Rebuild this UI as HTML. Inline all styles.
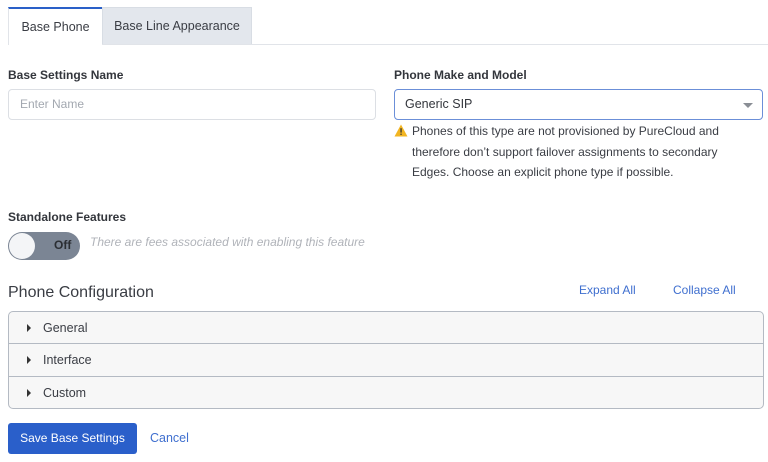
<!DOCTYPE html>
<html><head><style>
*{box-sizing:border-box;margin:0;padding:0}
body{width:768px;height:462px;background:#fff;font-family:"Liberation Sans",sans-serif;color:#4a4d54;position:relative;overflow:hidden;font-size:12px}
.a{position:absolute}
.lbl{font-weight:bold;font-size:12px;color:#33363c}
</style></head><body>
<div class="a" style="left:8px;top:44px;width:760px;height:1px;background:#e1e4e9"></div>
<div class="a" style="left:8px;top:7px;width:94px;height:38px;border-top:2px solid #2a60c8;border-left:1px solid #e1e4e9;background:#fff;text-align:center;line-height:36px;font-size:12.5px;color:#3a3d44">Base Phone</div>
<div class="a" style="left:102px;top:7px;width:150px;height:37px;background:#e3e7ed;border:1px solid #d8dde4;border-bottom:none;text-align:center;line-height:36px;font-size:12.5px;color:#3a3d44">Base Line Appearance</div>

<div class="a lbl" style="left:8px;top:68px">Base Settings Name</div>
<div class="a" style="left:8px;top:89px;width:368px;height:31px;border:1px solid #dcdfe4;border-radius:4px;padding-left:11px;line-height:29px;color:#a3a8b0;font-size:12px">Enter Name</div>

<div class="a lbl" style="left:394px;top:68px">Phone Make and Model</div>
<div class="a" style="left:394px;top:89px;width:369px;height:31px;border:1px solid #6b8fd8;border-radius:4px;padding-left:10px;line-height:29px;color:#33363c;font-size:12.5px">Generic SIP
<div class="a" style="right:9px;top:13px;width:0;height:0;border-left:5px solid transparent;border-right:5px solid transparent;border-top:5px solid #8a8e95"></div></div>
<svg class="a" style="left:394px;top:124px" width="14" height="13" viewBox="0 0 14 13"><path d="M7 0.5L13.5 12.5H0.5Z" fill="#f2b521"/><rect x="6.4" y="4.2" width="1.3" height="4.4" fill="#333"/><rect x="6.4" y="9.6" width="1.3" height="1.3" fill="#333"/></svg>
<div class="a" style="left:412px;top:121px;width:330px;line-height:20.5px;font-size:12px;color:#3a3d44">Phones of this type are not provisioned by PureCloud and therefore don’t support failover assignments to secondary Edges. Choose an explicit phone type if possible.</div>

<div class="a lbl" style="left:8px;top:210px">Standalone Features</div>
<div class="a" style="left:8px;top:232px;width:72px;height:28px;border-radius:14px;background:#7b8594"></div>
<div class="a" style="left:9px;top:233px;width:26px;height:26px;border-radius:13px;background:#f4f5f7"></div>
<div class="a" style="left:54px;top:238px;font-weight:bold;color:#2b2e33;font-size:12px">Off</div>
<div class="a" style="left:90px;top:235px;font-style:italic;color:#b0b3b9;font-size:12px">There are fees associated with enabling this feature</div>

<div class="a" style="left:8px;top:284px;font-size:16px;color:#3a3d44">Phone Configuration</div>
<div class="a" style="left:579px;top:283px;color:#3f6fcf;font-size:12px">Expand All</div>
<div class="a" style="left:673px;top:283px;color:#3f6fcf;font-size:12px">Collapse All</div>

<div class="a" style="left:8px;top:311px;width:756px;height:98px;border:1px solid #b4bac3;border-radius:5px;background:#f7f7f7;overflow:hidden">
 <div style="height:32px;border-bottom:1px solid #b4bac3;position:relative"><span class="a" style="left:18px;top:12px;border-top:4px solid transparent;border-bottom:4px solid transparent;border-left:4px solid #333"></span><span class="a" style="left:34px;top:9px;font-size:12.5px;color:#3a3d44">General</span></div>
 <div style="height:33px;border-bottom:1px solid #b4bac3;position:relative"><span class="a" style="left:18px;top:12px;border-top:4px solid transparent;border-bottom:4px solid transparent;border-left:4px solid #333"></span><span class="a" style="left:34px;top:9px;font-size:12.5px;color:#3a3d44">Interface</span></div>
 <div style="height:32px;position:relative"><span class="a" style="left:18px;top:12px;border-top:4px solid transparent;border-bottom:4px solid transparent;border-left:4px solid #333"></span><span class="a" style="left:34px;top:9px;font-size:12.5px;color:#3a3d44">Custom</span></div>
</div>

<div class="a" style="left:8px;top:423px;width:129px;height:31px;background:#2a5fca;border-radius:3px;color:#fff;text-align:center;line-height:31px;font-size:12px">Save Base Settings</div>
<div class="a" style="left:150px;top:431px;color:#3f6fcf;font-size:12.5px">Cancel</div>
</body></html>
